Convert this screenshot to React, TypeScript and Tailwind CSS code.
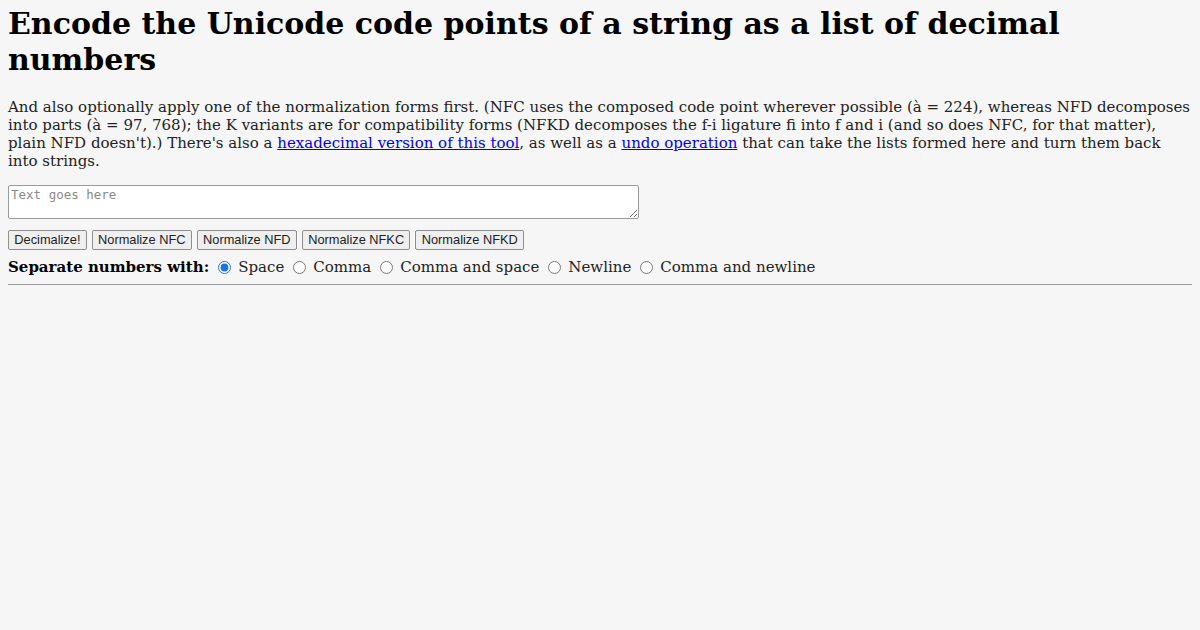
import React, { useState } from 'react';

const serif = { fontFamily: '"DejaVu Serif", serif' };

const separators = ['Space', 'Comma', 'Comma and space', 'Newline', 'Comma and newline'];
const actions = ['Decimalize!', 'Normalize NFC', 'Normalize NFD', 'Normalize NFKC', 'Normalize NFKD'];

export default function App() {
  const [text, setText] = useState('');
  const [sep, setSep] = useState('Space');

  return (
    <div className="min-h-[630px] bg-[#f6f6f6] px-2 pt-[6px] text-black" style={serif}>
      <h1 className="text-[30px] font-bold leading-[36px]">
        Encode the Unicode code points of a string as a list of decimal numbers
      </h1>
      <p className="mt-[20px] text-[15px] leading-[18px] text-[#222]">
        And also optionally apply one of the normalization forms first. (NFC uses the composed code point wherever
        possible (à = 224), whereas NFD decomposes into parts (à = 97, 768); the K variants are for compatibility
        forms (NFKD decomposes the f-i ligature ﬁ into f and i (and so does NFC, for that matter), plain NFD
        doesn't).) There's also a{' '}
        <a href="#" className="text-[#0000ee] underline">hexadecimal version of this tool</a>, as well as a{' '}
        <a href="#" className="text-[#0000ee] underline">undo operation</a> that can take the lists formed here and
        turn them back into strings.
      </p>
      <div className="mt-[15px]">
        <textarea
          value={text}
          onChange={(e) => setText(e.target.value)}
          placeholder="Text goes here"
          className="block h-[34px] w-[631px] rounded-[2px] border border-[#9a9a9a] bg-white px-[2px] py-[1px] text-[12.5px] leading-[15px] placeholder:text-[#8a8a8a]"
          style={{ fontFamily: '"DejaVu Sans Mono", monospace' }}
        />
      </div>
      <div className="mt-[11px] flex gap-[5px]">
        {actions.map((a) => (
          <button
            key={a}
            className="h-[20px] rounded-[2px] border border-[#8f8f8f] bg-[#efefef] px-[5.3px] text-[12.8px] leading-[16px] text-[#222]"
            style={{ fontFamily: '"Liberation Sans", Arial, sans-serif' }}
          >
            {a}
          </button>
        ))}
      </div>
      <div className="mt-[7px] flex items-center text-[15px] leading-[20px] text-[#222]">
        <span className="font-bold text-black">Separate numbers with:</span>
        {separators.map((s) => (
          <label key={s} className="flex items-center">
            <input
              type="radio"
              name="sep"
              checked={sep === s}
              onChange={() => setSep(s)}
              className="ml-[9px] mr-[7px] h-[13px] w-[13px] accent-[#1a73e8]"
            />
            <span>{s}</span>
          </label>
        ))}
      </div>
      <hr className="mt-[7px] border-t border-[#9a9a9a]" />
    </div>
  );
}
